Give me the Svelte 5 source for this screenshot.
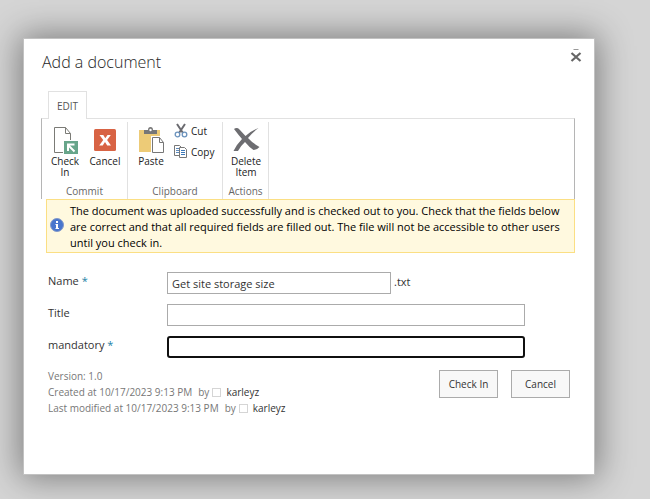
<script>
  let fileName = $state('Get site storage size');
  let title = $state('');
  let mandatory = $state('');
  const history = ['Created at 10/17/2023 9:13 PM', 'Last modified at 10/17/2023 9:13 PM'];
</script>

<div class="overlay">
  <main class="dialog" role="dialog" aria-labelledby="heading">
    <header>
      <h1 id="heading">Add a document</h1>
      <button class="close" aria-label="Close dialog">
        <svg width="12" height="16" viewBox="0 0 12 16">
          <path d="M3.5 1.5h5" stroke="#999" />
          <path d="M1.500 5l9 8M10.500 5l-9 8" stroke="#666" stroke-width="2.2" />
        </svg>
      </button>
    </header>

    <nav><button class="tab">EDIT</button></nav>

    <section class="ribbon">
      <div class="group commit">
        <div class="tools">
          <button class="large">
            <svg width="28" height="30" viewBox="0 0 28 30">
              <path d="M3.500 1.500h11l5 6v19h-16z" fill="#fff" stroke="#7b7b76" />
              <path d="M14.500 1.500v6h5" fill="none" stroke="#7b7b76" />
              <rect x="12" y="14" width="15" height="15" fill="#fff" />
              <rect x="13" y="15" width="14" height="13" fill="#67a58a" />
              <path d="M23.500 25.500l-6-6M17 25v-6.500h6.500" fill="none" stroke="#fff" stroke-width="2" />
            </svg>
            <span>Check<br />In</span>
          </button>
          <button class="large">
            <svg width="28" height="30" viewBox="0 0 28 30">
              <rect x="3" y="3" width="22" height="22" rx="1.500" fill="#d86344" />
              <path d="M8.500 9h3.800l2 3.200L16.500 9h3.300l-3.700 5.100 3.900 5.400h-3.800l-2.200-3.400-2.300 3.400H8.200l4-5.400z" fill="#fff" />
            </svg>
            <span>Cancel</span>
          </button>
        </div>
        <p>Commit</p>
      </div>
      <div class="group clipboard">
        <div class="tools">
          <button class="large">
            <svg width="28" height="30" viewBox="0 0 28 30">
              <path d="M2 4h21v22H2z" fill="#edcb77" />
              <path d="M7 8V4h4q0-3 2.500-3T16 4h4v4z" fill="#777" />
              <circle cx="13.500" cy="4" r="1.200" fill="#fff" />
              <path d="M14 10h9l5 6v12H14z" fill="#fff" />
              <path d="M15.500 11.500h7l4 5v10h-11zM22.500 11.500v5h4" fill="#fff" stroke="#777" />
            </svg>
            <span>Paste</span>
          </button>
          <div class="stack">
            <button class="small">
              <svg width="16" height="16" viewBox="0 0 16 16">
                <path d="M4 1l6 9M12 1L6 10" stroke="#6b6b70" stroke-width="2" />
                <circle cx="4.500" cy="11.500" r="2.300" fill="#fff" stroke="#6c93bd" stroke-width="1.300" />
                <circle cx="11.500" cy="11.500" r="2.300" fill="#fff" stroke="#6c93bd" stroke-width="1.300" />
              </svg>
              <span>Cut</span>
            </button>
            <button class="small">
              <svg width="16" height="16" viewBox="0 0 16 16">
                <path d="M1.500 1.500h5l2 2v8h-7z" fill="#fff" stroke="#777" />
                <path d="M3 4.500h3M3 6.500h3M3 8.500h3" stroke="#5e8bbd" />
                <path d="M6.500 3.500h5l2 2v8h-7z" fill="#fff" stroke="#777" />
                <path d="M8 6.500h4M8 8.500h4M8 10.500h4" stroke="#3d79b8" />
              </svg>
              <span>Copy</span>
            </button>
          </div>
        </div>
        <p>Clipboard</p>
      </div>
      <div class="group actions">
        <div class="tools">
          <button class="large">
            <svg width="28" height="30" viewBox="0 0 28 30">
              <path d="M2 3q3-2 5.500.500l6 6.500q5-5 13-8-6.500 5-10.500 10 4.500 5 11.500 9-2.500 3-6 3-4.500-3-8.500-8-4.500 4-7 9H1.500q3.500-7 8.500-12Q6.500 9 2 3z" fill="#6d6d71" />
            </svg>
            <span>Delete<br />Item</span>
          </button>
        </div>
        <p>Actions</p>
      </div>
    </section>

    <div class="notice" role="status">
      <svg width="14" height="14" viewBox="0 0 14 14">
        <circle cx="7" cy="7" r="6.500" fill="#4876cd" stroke="#8399c9" />
        <path d="M6 3h2v2H6zM5.500 6H8v4h1v1H5.500v-1H6V7h-.500z" fill="#fff" />
      </svg>
      <span>The document was uploaded successfully and is checked out to you. Check that the fields below are correct and that all required fields are filled out. The file will not be accessible to other users until you check in.</span>
    </div>

    <form>
      <div class="row">
        <label for="name">Name <b>*</b></label>
        <div class="field">
          <input id="name" class="short" bind:value={fileName} /><span class="ext">.txt</span>
        </div>
      </div>
      <div class="row">
        <label for="title">Title</label>
        <div class="field"><input id="title" bind:value={title} /></div>
      </div>
      <div class="row">
        <label for="mandatory">mandatory <b>*</b></label>
        <div class="field"><input id="mandatory" class="active" bind:value={mandatory} /></div>
      </div>

      <footer>
        <div class="meta">
          <div>Version: 1.0</div>
          {#each history as entry}
            <div class="entry"><span>{entry}</span><span class="by">by</span><i></i><a href="#karleyz">karleyz</a></div>
          {/each}
        </div>
        <div class="buttons">
          <button type="button">Check In</button>
          <button type="button">Cancel</button>
        </div>
      </footer>
    </form>
  </main>
</div>

<style>
  :global(body) { margin: 0; background: #d5d5d5; }
  .overlay {
    box-sizing: border-box;
    min-height: 100vh;
    display: flex;
    padding: 39px 56px 25px 24px;
    overflow: hidden;
    font: 11px/16px "Open Sans", "Noto Sans", sans-serif;
    color: #333;
  }
  .dialog {
    box-sizing: border-box;
    flex: 1;
    min-width: 0;
    padding: 0 19px 0 17px;
    background: #fff;
    box-shadow: 0 0 0 1px #c2c2c2, 0 0 32px 4px rgba(0, 0, 0, 0.42);
  }
  button { margin: 0; padding: 0; border: 0; background: none; font: inherit; color: inherit; }
  svg { display: block; flex: none; }
  header { display: flex; justify-content: space-between; height: 52px; padding-left: 1px; }
  h1 { margin: 12px 0 0; font-size: 16px; line-height: 22px; font-weight: 300; color: #262626; }
  .close { width: 12px; height: 16px; margin-top: 9px; margin-right: -7px; }
  nav { height: 27px; padding-left: 7px; }
  .tab {
    position: relative;
    box-sizing: border-box;
    width: 39px;
    height: 28px;
    border: 1px solid #e1e1e1;
    border-bottom: 0;
    background: #fff;
    font-size: 10px;
    color: #555;
  }
  .ribbon {
    box-sizing: border-box;
    display: flex;
    height: 81px;
    padding-top: 3px;
    border: 1px solid #e1e1e1;
    border-left-color: #b5b5b5;
    border-right-color: #b5b5b5;
    border-bottom: 0;
    font-size: 10px;
    line-height: 11px;
    color: #222;
  }
  .group { display: flex; flex-direction: column; box-sizing: border-box; border-right: 1px solid #e1e1e1; }
  .commit { width: 86px; }
  .clipboard { width: 95px; }
  .actions { width: 46px; }
  .tools { display: flex; flex: 1; padding-left: 3px; }
  .large { display: flex; flex-direction: column; align-items: center; width: 40px; padding-top: 4px; }
  .stack { display: flex; flex-direction: column; align-items: flex-start; gap: 5px; padding: 1px 0 0 2px; }
  .small { display: flex; align-items: center; gap: 2px; height: 16px; }
  .group p { margin: 0; height: 13px; text-align: center; color: #666; }
  .notice {
    display: flex;
    align-items: center;
    gap: 6px;
    margin-left: 5px;
    padding: 3px 3px 1px;
    border: 1px solid #fbdf84;
    background: #fff9df;
    color: #000;
  }
  .notice svg { margin-bottom: 4px; }
  form { padding: 19px 5px 0 7px; }
  .row { display: flex; height: 32px; }
  label { width: 119px; line-height: 18px; }
  b { font-weight: 400; color: #2381a5; }
  .field { display: flex; flex: 1; max-width: 358px; }
  input {
    box-sizing: border-box;
    flex: 1;
    min-width: 0;
    height: 22px;
    padding: 0 4px;
    border: 1px solid #ababab;
    border-radius: 0;
    background: #fff;
    font: inherit;
    color: #333;
  }
  .short { flex: 0 1 224px; }
  .active { border: 2px solid #101010; border-radius: 3px; outline: none; }
  .ext { padding-left: 3px; line-height: 20px; }
  footer { display: flex; justify-content: space-between; }
  .meta { font-size: 10px; line-height: 16px; color: #777; }
  .entry { display: flex; align-items: center; }
  .by { margin-left: 6px; }
  i { box-sizing: border-box; width: 9px; height: 9px; margin: 0 5px 0 3px; border: 1px solid #d5d5d5; }
  a { color: #333; text-decoration: none; }
  .buttons { display: flex; gap: 13px; padding-top: 2px; }
  .buttons button {
    box-sizing: border-box;
    width: 59px;
    height: 28px;
    border: 1px solid #ababab;
    background: #f8f8f8;
    font-size: 10px;
  }
</style>
